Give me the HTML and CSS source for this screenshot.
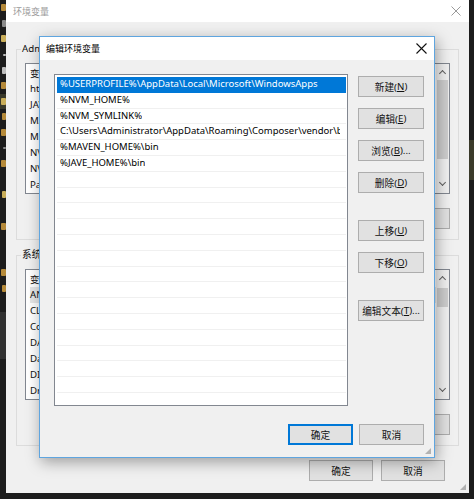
FILE: index.html
```html
<!DOCTYPE html>
<html>
<head>
<meta charset="utf-8">
<link rel="stylesheet" href="styles.css">
</head>
<body>
<div class="desk">
  <div class="code">
    <div class="ln"><span class="blk b1"></span></div>
    <div class="ln"><span class="blk b2 w2"></span></div>
    <div class="ln"><span class="blk b3"></span></div>
    <div class="ln"><span class="blk b4 w1"></span></div>
    <div class="ln"><span class="blk b4 w2"></span></div>
    <div class="ln"><span class="blk b1"></span></div>
    <div class="ln band1"><span class="blk b3"></span></div>
    <div class="ln"><span class="blk b1 w2"></span></div>
    <div class="ln"><span class="blk b1"></span></div>
    <div class="ln"><span class="blk b2 w1"></span></div>
    <div class="ln"><span class="blk b1"></span></div>
    <div class="ln"></div>
    <div class="ln"><span class="blk b3 w2"></span></div>
    <div class="ln"></div>
    <div class="ln"><span class="blk b1"></span></div>
    <div class="ln"></div>
    <div class="ln"></div>
    <div class="ln"><span class="blk b1"></span></div>
    <div class="ln"><span class="blk b1 w2"></span></div>
    <div class="ln"></div>
    <div class="ln band2"></div>
    <div class="ln band2"></div>
    <div class="ln band2"></div>
  </div>
  <div class="side-band"></div>

  <div class="win outer">
    <div class="titlebar outer-title">
      <span class="title">环境变量</span>
      <span class="close">
        <svg width="10" height="10" viewBox="0 0 10 10"><path d="M0.5 0.5L9.5 9.5M9.5 0.5L0.5 9.5" stroke="#9a9a9a" stroke-width="1"/></svg>
      </span>
    </div>
    <div class="outer-body">
      <fieldset class="group g-user">
        <legend>Administrator 的用户变量(U)</legend>
        <div class="olist">
          <div class="orows">
            <div class="orow head">变量</div>
            <div class="orow">http_proxy</div>
            <div class="orow">JAVA_HOME</div>
            <div class="orow">MAVEN_HOME</div>
            <div class="orow">MOZ_PLUGIN_PATH</div>
            <div class="orow">NVM_HOME</div>
            <div class="orow">NVM_SYMLINK</div>
            <div class="orow">Path</div>
          </div>
          <div class="vscroll">
            <span class="arr up"></span>
            <span class="thumb t-user"></span>
            <span class="arr down"></span>
          </div>
        </div>
        <div class="obtns">
          <span class="btn obtn">新建(N)...</span>
          <span class="btn obtn">编辑(E)...</span>
          <span class="btn obtn">删除(D)</span>
        </div>
      </fieldset>
      <fieldset class="group g-sys">
        <legend>系统变量(S)</legend>
        <div class="olist">
          <div class="orows">
            <div class="orow head">变量</div>
            <div class="orow sel">ANDROID_HOME</div>
            <div class="orow">CLASSPATH</div>
            <div class="orow">ComSpec</div>
            <div class="orow">DART_HOME</div>
            <div class="orow">DataGrip</div>
            <div class="orow">DIRECTX</div>
            <div class="orow">DriverData</div>
          </div>
          <div class="vscroll">
            <span class="arr up"></span>
            <span class="thumb t-sys"></span>
            <span class="arr down"></span>
          </div>
        </div>
        <div class="obtns">
          <span class="btn obtn">新建(W)...</span>
          <span class="btn obtn">编辑(I)...</span>
          <span class="btn obtn">删除(L)</span>
        </div>
      </fieldset>
      <div class="ofoot">
        <span class="btn fbtn">确定</span>
        <span class="btn fbtn">取消</span>
      </div>
    </div>
    <span class="grip outer-grip"></span>
  </div>

  <div class="win dlg">
    <div class="titlebar dlg-title">
      <span class="title dark">编辑环境变量</span>
      <span class="close">
        <svg width="11" height="11" viewBox="0 0 11 11"><path d="M0.5 0.5L10.5 10.5M10.5 0.5L0.5 10.5" stroke="#111" stroke-width="1.1"/></svg>
      </span>
    </div>
    <div class="dlg-body">
      <div class="dlg-main">
        <div class="plist">
          <div class="prow selected"><span class="ptxt">%USERPROFILE%\AppData\Local\Microsoft\WindowsApps</span></div>
          <div class="prow"><span class="ptxt">%NVM_HOME%</span></div>
          <div class="prow"><span class="ptxt">%NVM_SYMLINK%</span></div>
          <div class="prow"><span class="ptxt">C:\Users\Administrator\AppData\Roaming\Composer\vendor\bin</span></div>
          <div class="prow"><span class="ptxt">%MAVEN_HOME%\bin</span></div>
          <div class="prow"><span class="ptxt">%JAVE_HOME%\bin</span></div>
          <div class="prow"></div>
          <div class="prow"></div>
          <div class="prow"></div>
          <div class="prow"></div>
          <div class="prow"></div>
          <div class="prow"></div>
          <div class="prow"></div>
          <div class="prow"></div>
          <div class="prow"></div>
          <div class="prow"></div>
          <div class="prow"></div>
          <div class="prow"></div>
          <div class="prow"></div>
          <div class="prow"></div>
          <div class="prow"></div>
          <div class="prow"></div>
        </div>
        <div class="side-btns">
          <span class="btn">新建(<u>N</u>)</span>
          <span class="btn">编辑(<u>E</u>)</span>
          <span class="btn">浏览(<u>B</u>)...</span>
          <span class="btn">删除(<u>D</u>)</span>
          <span class="btn gap-top">上移(<u>U</u>)</span>
          <span class="btn">下移(<u>O</u>)</span>
          <span class="btn gap-top">编辑文本(<u>T</u>)...</span>
        </div>
      </div>
      <div class="dlg-foot">
        <span class="btn default">确定</span>
        <span class="btn">取消</span>
      </div>
    </div>
    <span class="grip dlg-grip"></span>
  </div>
</div>
</body>
</html>
```

FILE: styles.css
```css
html, body {
  margin: 0;
  padding: 0;
}
body {
  width: 474px;
  height: 499px;
  overflow: hidden;
  background: #1c1c1c;
  font-family: "Noto Sans", "Noto Sans CJK SC", sans-serif;
  font-size: 9.5px;
  color: #000;
}
.desk {
  position: relative;
  width: 474px;
  height: 499px;
  overflow: hidden;
}

/* code editor glimpses behind the windows */
.code {
  position: absolute;
  left: 0;
  top: 0;
  width: 6px;
  height: 499px;
  overflow: hidden;
  display: flex;
  flex-direction: column;
}
.ln {
  height: 15.6px;
  display: flex;
  align-items: center;
  justify-content: flex-end;
  flex: none;
}
.blk {
  display: block;
  width: 5px;
  height: 7px;
  border-radius: 1px;
}
.blk.w1 { width: 3px; height: 2px; }
.blk.w2 { width: 4px; }
.b1 { background: #b58a3a; }
.b2 { background: #8a8a8a; }
.b3 { background: #c9ae5a; }
.b4 { background: #bdbdbd; }
.band1 { background: #39392b; }
.band2 { background: #303030; }
.side-band {
  position: absolute;
  right: 0;
  top: 140px;
  width: 6px;
  height: 40px;
  background: #3a3a2a;
}

/* windows */
.win {
  position: absolute;
  display: flex;
  flex-direction: column;
  background: #f0f0f0;
}
.outer {
  left: 6px;
  top: 0;
  width: 463px;
  height: 493px;
}
.dlg {
  left: 39px;
  top: 36px;
  width: 394px;
  height: 420px;
  border: 1px solid #5fa5df;
  box-shadow: 2px 4px 14px rgba(0, 0, 0, 0.35);
}
.titlebar {
  display: flex;
  align-items: center;
  justify-content: space-between;
  background: #fff;
  flex: none;
}
.outer-title {
  height: 22px;
  padding: 0 8px 0 7px;
}
.dlg-title {
  height: 23px;
  padding: 0 7px 0 6px;
}
.title {
  font-family: "Noto Sans CJK SC", sans-serif;
  font-size: 9px;
  color: #9a9a9a;
}
.title.dark {
  color: #000;
}
.close {
  display: flex;
  align-items: center;
}

/* outer window body */
.outer-body {
  flex: 1;
  display: flex;
  flex-direction: column;
  padding: 21px 10px 0 10px;
}
.group {
  box-sizing: border-box;
  margin: 0;
  padding: 8px 8px 0 8px;
  border: 1px solid #dcdcdc;
  display: flex;
  flex-direction: column;
  align-items: stretch;
}
.group legend {
  padding: 0 1px;
  margin-left: -4px;
  font-family: "Noto Sans", "Noto Sans CJK SC", sans-serif;
  font-size: 9.7px;
  color: #111;
  line-height: 12px;
}
.g-user {
  height: 197px;
}
.g-sys {
  margin-top: 9px;
  height: 197px;
}
.olist {
  box-sizing: border-box;
  display: flex;
  height: 131px;
  background: #fff;
  border: 1px solid #828790;
  flex: none;
}
.orows {
  flex: 1;
  padding: 1px 0 0 4px;
  overflow: hidden;
}
.orow {
  height: 16px;
  line-height: 16px;
  font-size: 9.7px;
  color: #111;
  white-space: nowrap;
}
.orow.head {
  font-family: "Noto Sans CJK SC", sans-serif;
  font-size: 9.5px;
}
.orow.sel {
  background: #e6e6e6;
}
.vscroll {
  width: 13px;
  background: #f0f0f0;
  display: flex;
  flex-direction: column;
  align-items: center;
}
.arr {
  width: 4px;
  height: 4px;
  border-left: 1.5px solid #606060;
  border-top: 1.5px solid #606060;
  flex: none;
}
.arr.up {
  transform: rotate(45deg);
  margin-top: 7px;
}
.arr.down {
  transform: rotate(225deg);
  margin-top: auto;
  margin-bottom: 8px;
}
.thumb {
  width: 11px;
  background: #cdcdcd;
  flex: none;
}
.t-user {
  margin-top: 4px;
  height: 79px;
}
.t-sys {
  margin-top: 6px;
  height: 19px;
}
.obtns {
  display: flex;
  justify-content: flex-end;
  gap: 8px;
  margin-top: 14px;
}

/* buttons */
.btn {
  box-sizing: border-box;
  display: flex;
  align-items: center;
  justify-content: center;
  height: 21px;
  width: 66px;
  background: #e1e1e1;
  border: 1px solid #adadad;
  font-family: "Noto Sans", "Noto Sans CJK SC", sans-serif;
  font-size: 9.7px;
  color: #111;
  white-space: nowrap;
  flex: none;
}
.btn u {
  text-decoration-thickness: 1px;
  text-underline-offset: 1px;
}
.obtn {
  width: 70px;
}
.ofoot {
  display: flex;
  justify-content: flex-end;
  gap: 8px;
  margin-top: 14px;
  padding-right: 14px;
}
.fbtn {
  width: 64px;
}
.grip {
  position: absolute;
  width: 6px;
  height: 6px;
  background-image: radial-gradient(circle, #b0b0b0 0.7px, transparent 0.9px);
  background-size: 2px 2px;
  clip-path: polygon(100% 0, 100% 100%, 0 100%);
}
.outer-grip {
  right: 3px;
  bottom: 3px;
}
.dlg-grip {
  right: 3px;
  bottom: 3px;
}

/* dialog body */
.dlg-body {
  flex: 1;
  display: flex;
  flex-direction: column;
  padding: 14px 10px 0 14px;
}
.dlg-main {
  display: flex;
  gap: 10px;
}
.plist {
  box-sizing: border-box;
  width: 294px;
  height: 332px;
  background: #fff;
  border: 1px solid #828790;
  padding: 2px 1px 0 2px;
  overflow: hidden;
}
.prow {
  box-sizing: border-box;
  height: 15.8px;
  line-height: 14.8px;
  padding-left: 3px;
  border-bottom: 1px solid #f0f0f0;
  color: #000;
  white-space: nowrap;
  overflow: hidden;
}
.ptxt {
  display: inline-block;
  max-width: 280px;
  overflow: hidden;
  vertical-align: top;
}
.prow.selected {
  background: #0078d7;
  color: #fff;
  border-bottom-color: #0078d7;
}
.side-btns {
  display: flex;
  flex-direction: column;
  gap: 11px;
  padding-top: 2px;
}
.side-btns .gap-top {
  margin-top: 16px;
}
.dlg-foot {
  display: flex;
  justify-content: flex-end;
  gap: 6px;
  margin-top: 18px;
}
.dlg-foot .btn {
  width: 65px;
}
.btn.default {
  border: 1px solid #0078d7;
  box-shadow: inset 0 0 0 1px #0078d7;
}
```
